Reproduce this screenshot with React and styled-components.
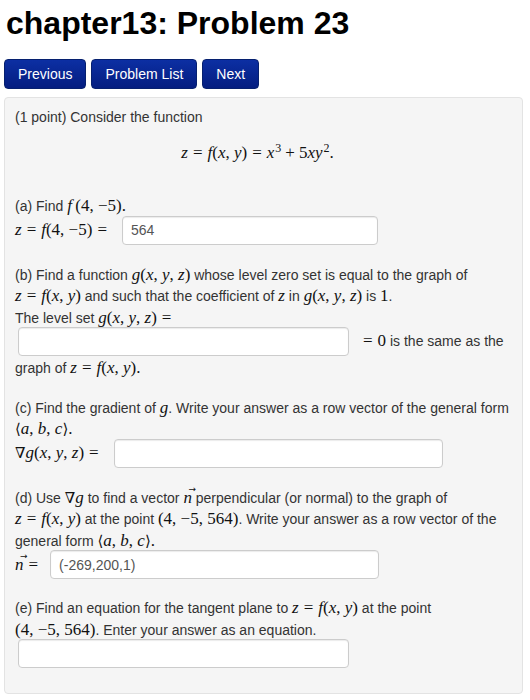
import React from 'react'
import styled, { createGlobalStyle } from 'styled-components'

const GlobalStyle = createGlobalStyle`
  html, body {
    margin: 0;
    padding: 0;
    background: #fff;
  }
  body {
    font-family: "Liberation Sans", Arial, sans-serif;
    font-size: 14px;
    color: #333;
  }
`

const Page = styled.div`
  width: 530px;
  padding: 0 8px 0 4px;
  box-sizing: border-box;
`

const Title = styled.h1`
  margin: 0;
  padding: 4px 0 0 2px;
  font-size: 32px;
  line-height: 38px;
  font-weight: bold;
  color: #000;
`

const NavBar = styled.div`
  display: flex;
  gap: 5px;
  margin-top: 17px;
`

const NavButton = styled.button`
  height: 30px;
  padding: 0 13px;
  border: 1px solid #06206f;
  border-radius: 4px;
  background: linear-gradient(#0c2fa3, #041d80);
  color: #fff;
  font-family: "Liberation Sans", Arial, sans-serif;
  font-size: 14px;
  cursor: pointer;
`

const Panel = styled.div`
  margin-top: 8px;
  width: 519px;
  box-sizing: border-box;
  padding: 9px 10px 24px 10px;
  background: #f5f5f5;
  border: 1px solid #e3e3e3;
  border-radius: 4px;
  line-height: 21.5px;
`

const Part = styled.div`
  margin-top: ${({ $gap }) => $gap || 0}px;
`

const Line = styled.div`
  height: 21.5px;
  white-space: nowrap;
`

const InputLine = styled.div`
  display: flex;
  align-items: center;
  gap: ${({ $gap }) => $gap || 0}px;
  height: 29px;
  margin: -1px 0 1px 0;
  padding-left: ${({ $indent }) => $indent || 0}px;
`

const Display = styled.div`
  height: 21.5px;
  margin-top: 13px;
  padding-right: 12px;
  text-align: center;
`

const M = styled.span`
  font-family: "Liberation Serif", "Times New Roman", serif;
  font-size: 17px;
  color: #111;
  white-space: nowrap;
`

const I = styled.i`
  font-style: italic;
`

const Rel = styled.span`
  margin: 0 5px;
`

const Bin = styled.span`
  margin: 0 4px;
`

const Sup = styled.sup`
  font-size: 12px;
  vertical-align: 6px;
  line-height: 0;
  margin-left: 1px;
`

const Sym = styled.span`
  font-family: "DejaVu Serif", serif;
  font-size: 15px;
  font-weight: normal;
  line-height: 0;
`

const Answer = styled.input`
  width: ${({ $w }) => $w}px;
  height: 29px;
  box-sizing: border-box;
  padding: 4px 8px;
  border: 1px solid #ccc;
  border-radius: 4px;
  background: #fff;
  box-shadow: inset 0 1px 1px rgba(0, 0, 0, 0.08);
  font-family: "Liberation Sans", Arial, sans-serif;
  font-size: 14px;
  color: #555;
  outline: none;
`

const Vec = styled.span`
  position: relative;
  display: inline-block;
`

const Arrow = styled.span`
  position: absolute;
  left: 5px;
  top: -8px;
  font-family: "DejaVu Sans", sans-serif;
  font-size: 9px;
  font-style: normal;
`

const Eq = () => <Rel>=</Rel>

const f = (
  <>
    <I>f</I>(<I>x</I>, <I>y</I>)
  </>
)

const g = (
  <>
    <I>g</I>(<I>x</I>, <I>y</I>, <I>z</I>)
  </>
)

const abc = (
  <M>
    <Sym>⟨</Sym><I>a</I>, <I>b</I>, <I>c</I><Sym>⟩</Sym>.
  </M>
)

const point = <M>(4, −5, 564)</M>

const N = () => (
  <Vec>
    <I>n</I>
    <Arrow>→</Arrow>
  </Vec>
)

export default function App() {
  return (
    <Page>
      <GlobalStyle />
      <Title>chapter13: Problem 23</Title>
      <NavBar>
        <NavButton>Previous</NavButton>
        <NavButton>Problem List</NavButton>
        <NavButton>Next</NavButton>
      </NavBar>

      <Panel>
        <Line>(1 point) Consider the function</Line>
        <Display>
          <M>
            <I>z</I><Eq />{f}<Eq /><I>x</I>
            <Sup>3</Sup><Bin>+</Bin>5<I>xy</I>
            <Sup>2</Sup>.
          </M>
        </Display>

        <Part $gap={32}>
          <Line>
            (a) Find <M><I>f</I>&thinsp;(4, −5).</M>
          </Line>
          <InputLine $gap={10}>
            <M>
              <I>z</I><Eq /><I>f</I>(4, −5)<Eq />
            </M>
            <Answer $w={256} defaultValue="564" />
          </InputLine>
        </Part>

        <Part $gap={19}>
          <Line>
            (b) Find a function <M>{g}</M> whose level zero set is equal to the graph of
          </Line>
          <Line>
            <M>
              <I>z</I><Eq />{f}
            </M>{' '}
            and such that the coefficient of <M><I>z</I></M> in <M>{g}</M> is <M>1</M>.
          </Line>
          <Line>
            The level set <M>{g}<Eq /></M>
          </Line>
          <InputLine $indent={3} $gap={9}>
            <Answer $w={331} />
            <span>
              <M><Rel>=</Rel>0</M> is the same as the
            </span>
          </InputLine>
          <Line>
            graph of <M><I>z</I><Eq />{f}.</M>
          </Line>
        </Part>

        <Part $gap={18}>
          <Line>
            (c) Find the gradient of <M><I>g</I></M>. Write your answer as a row vector of the general form
          </Line>
          <Line>{abc}</Line>
          <InputLine $gap={10}>
            <M>
              <Sym>∇</Sym>
              {g}<Eq />
            </M>
            <Answer $w={329} />
          </InputLine>
        </Part>

        <Part $gap={19}>
          <Line>
            (d) Use <M><Sym>∇</Sym><I>g</I></M> to find a vector <M><N /></M> perpendicular (or normal) to the graph of
          </Line>
          <Line>
            <M>
              <I>z</I><Eq />{f}
            </M>{' '}
            at the point {point}. Write your answer as a row vector of the
          </Line>
          <Line>general form {abc}</Line>
          <InputLine $gap={7}>
            <M>
              <N /><Eq />
            </M>
            <Answer $w={329} defaultValue="(-269,200,1)" />
          </InputLine>
        </Part>

        <Part $gap={18}>
          <Line>
            (e) Find an equation for the tangent plane to <M><I>z</I><Eq />{f}</M> at the point
          </Line>
          <Line>{point}. Enter your answer as an equation.</Line>
          <InputLine $indent={3}>
            <Answer $w={331} />
          </InputLine>
        </Part>
      </Panel>
    </Page>
  )
}
